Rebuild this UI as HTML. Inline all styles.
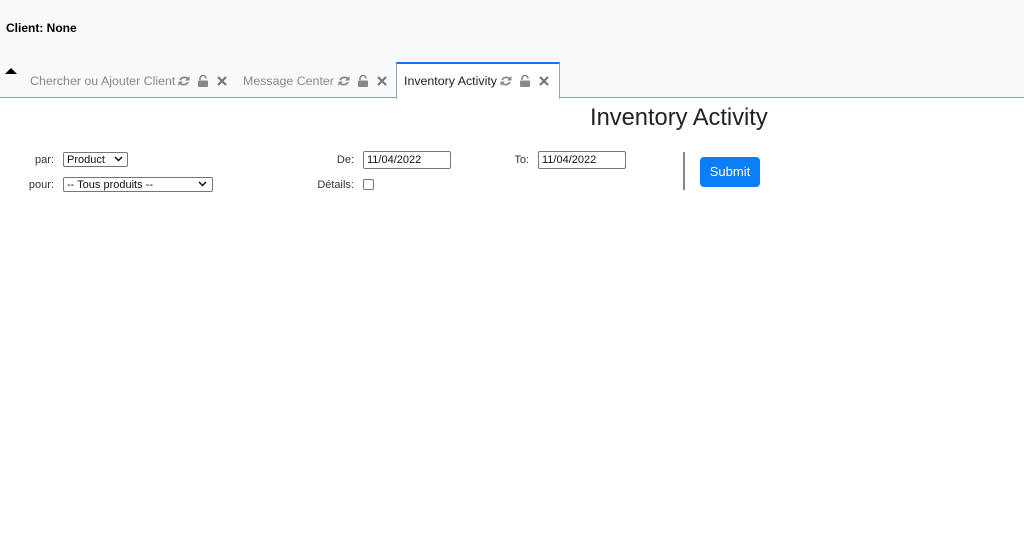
<!DOCTYPE html>
<html><head><meta charset="utf-8"><style>
body{margin:0;width:1024px;height:543px;background:#fff;font-family:"Liberation Sans",Arial,sans-serif;position:relative;overflow:hidden;color:#222}
.a{position:absolute;white-space:nowrap}
.hdr{position:absolute;left:0;top:0;width:1024px;height:97px;background:#f8f9fa;border-bottom:1px solid #8ea6c0}
.tab{font-size:12.4px;color:#888;top:74px}
.ic{position:absolute;top:75px}
.lbl{font-size:11px;color:#333;text-align:right}
.box{position:absolute;border:1px solid #767676;border-radius:2px;background:#fff;font-size:11px;box-sizing:border-box;padding-left:3px;color:#111}
</style></head><body>
<div class="hdr"></div>
<div class="a" style="left:6px;top:21px;font-size:12px;font-weight:bold;color:#000">Client: None</div>
<svg class="a" style="left:5px;top:67px" width="12" height="8"><polygon points="0,7 6,1 12,7" fill="#000"/></svg>
<div class="a" style="left:396px;top:62px;width:164px;height:37px;background:#fff;border-top:2px solid #1a73e8;border-left:1px solid #8ea6c0;border-right:1px solid #8ea6c0;box-sizing:border-box"></div>
<div class="a tab" style="left:30px">Chercher ou Ajouter Client</div>
<div class="a tab" style="left:243px">Message Center</div>
<div class="a tab" style="left:404px;color:#222">Inventory Activity</div>
<svg width="0" height="0" style="position:absolute"><defs>
<g id="r"><path d="M10.5 4.5A5 5 0 0 0 2 5M1.5 7.5A5 5 0 0 0 10 7" stroke="#888" stroke-width="1.8" fill="none"/><path d="M11.5 1v4.5H7zM0.5 11V6.5H5z" fill="#888"/></g>
<g id="l"><path d="M3 5V3.5a3 3 0 0 1 6 0" stroke="#888" stroke-width="1.6" fill="none"/><rect x="1" y="5.5" width="10" height="6.5" rx="1" fill="#888"/></g>
<g id="x"><path d="M2 2l8 8M10 2l-8 8" stroke="#777" stroke-width="2.2"/></g>
</defs></svg>
<svg class="ic" style="left:178px" width="12" height="12"><use href="#r"/></svg>
<svg class="ic" style="left:197px" width="12" height="12"><use href="#l"/></svg>
<svg class="ic" style="left:216px" width="12" height="12"><use href="#x"/></svg>
<svg class="ic" style="left:338px" width="12" height="12"><use href="#r"/></svg>
<svg class="ic" style="left:357px" width="12" height="12"><use href="#l"/></svg>
<svg class="ic" style="left:376px" width="12" height="12"><use href="#x"/></svg>
<svg class="ic" style="left:500px" width="12" height="12"><use href="#r"/></svg>
<svg class="ic" style="left:519px" width="12" height="12"><use href="#l"/></svg>
<svg class="ic" style="left:538px" width="12" height="12"><use href="#x"/></svg>
<div class="a" style="left:590px;top:105px;font-size:23.7px;color:#222">Inventory Activity</div>
<div class="a lbl" style="left:20px;width:34px;top:154px">par:</div>
<div class="a lbl" style="left:20px;width:34px;top:179px">pour:</div>
<div class="box" style="left:63px;top:152px;width:65px;height:15px;line-height:14px">Product</div>
<svg class="a" style="left:114px;top:156px" width="9" height="6"><path d="M1 1l3.5 3.5L8 1" stroke="#111" stroke-width="1.5" fill="none"/></svg>
<div class="box" style="left:63px;top:177px;width:150px;height:15px;line-height:14px">-- Tous produits --</div>
<svg class="a" style="left:198px;top:181px" width="9" height="6"><path d="M1 1l3.5 3.5L8 1" stroke="#111" stroke-width="1.5" fill="none"/></svg>
<div class="a lbl" style="left:310px;width:44px;top:154px">De:</div>
<div class="a lbl" style="left:300px;width:54px;top:179px">Détails:</div>
<div class="box" style="left:363px;top:151px;width:88px;height:18px;line-height:16px">11/04/2022</div>
<div class="box" style="left:363px;top:179px;width:11px;height:11px;border-radius:2px"></div>
<div class="a lbl" style="left:500px;width:29px;top:154px">To:</div>
<div class="box" style="left:538px;top:151px;width:88px;height:18px;line-height:16px">11/04/2022</div>
<div class="a" style="left:683px;top:152px;width:2px;height:38px;background:#888"></div>
<div class="a" style="left:700px;top:157px;width:60px;height:30px;background:#0b7df5;border-radius:4px;color:#fff;font-size:13px;line-height:30px;text-align:center">Submit</div>
</body></html>
